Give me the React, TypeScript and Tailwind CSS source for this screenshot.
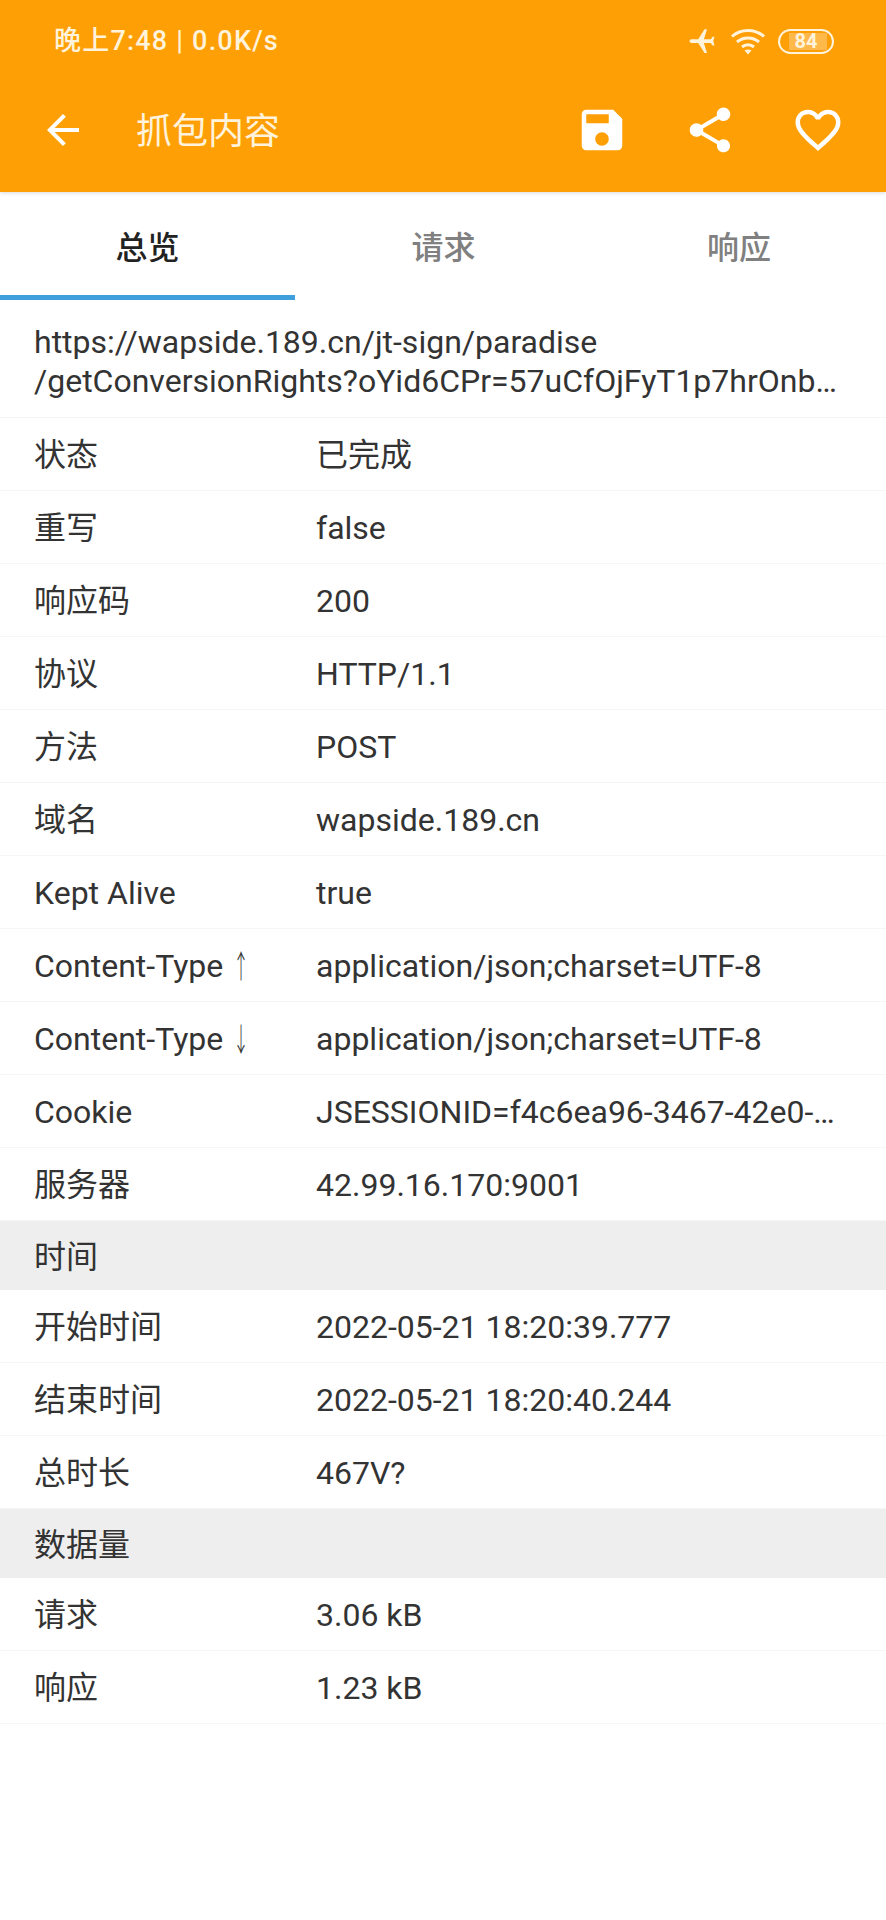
const font = { fontFamily: '"Roboto", "Noto Sans CJK SC", sans-serif' };

type R = { k: string; arrow?: string; v?: string };
const top: R[] = [
  { k: '状态', v: '已完成' },
  { k: '重写', v: 'false' },
  { k: '响应码', v: '200' },
  { k: '协议', v: 'HTTP/1.1' },
  { k: '方法', v: 'POST' },
  { k: '域名', v: 'wapside.189.cn' },
  { k: 'Kept Alive', v: 'true' },
  { k: 'Content-Type', arrow: '↑', v: 'application/json;charset=UTF-8' },
  { k: 'Content-Type', arrow: '↓', v: 'application/json;charset=UTF-8' },
  { k: 'Cookie', v: 'JSESSIONID=f4c6ea96-3467-42e0-…' },
  { k: '服务器', v: '42.99.16.170:9001' },
];
const time: R[] = [
  { k: '开始时间', v: '2022-05-21 18:20:39.777' },
  { k: '结束时间', v: '2022-05-21 18:20:40.244' },
  { k: '总时长', v: '467V?' },
];
const data: R[] = [
  { k: '请求', v: '3.06 kB' },
  { k: '响应', v: '1.23 kB' },
];

function Row({ k, arrow, v }: R) {
  return (
    <div className="flex h-[73px] items-center border-b border-[#f6f6f6] pl-[34px] pr-[40px] pt-[2px] text-[32px] leading-[40px] text-[#333333]">
      <div className="flex w-[282px] shrink-0 items-center whitespace-nowrap">
        <span>{k}</span>
        {arrow && <span className="ml-[2px] inline-block h-[40px] scale-x-50 font-['Noto_Sans_CJK_SC'] font-light leading-[36px]">{arrow}</span>}
      </div>
      <div className="min-w-0 flex-1 whitespace-nowrap">{v}</div>
    </div>
  );
}

function Section({ title }: { title: string }) {
  return (
    <div className="flex h-[69px] items-center bg-[#eeeeee] pl-[34px] pt-[2px] text-[32px] text-[#333333]">{title}</div>
  );
}

export default function App() {
  return (
    <div className="h-[1920px] w-[886px] overflow-hidden bg-white" style={font}>
      <header className="h-[192px] bg-[#ff9f06] text-white shadow-[0_1px_4px_rgba(0,0,0,0.15)]">
        <div className="flex h-[80px] items-center pl-[54px] pr-[52px] pt-[2px] text-[27px] font-medium text-[#fff3dc]">
          <span className="tracking-[1.2px]">晚上7:48 | 0.0K/s</span>
          <div className="ml-auto flex items-center">
            <svg width="34" height="30" viewBox="0 0 24 24" fill="#fff3dc" className="mr-[11px]">
              <path d="M21 16v-2l-8-5V3.5C13 2.67 12.33 2 11.5 2S10 2.67 10 3.5V9l-8 5v2l8-2.5V19l-2 1.5V22l3.5-1 3.5 1v-1.5L13 19v-5.5l8 2.5z" transform="rotate(-90 12 12) translate(0.5 0)" />
            </svg>
            <svg width="36" height="30" viewBox="0 0 36 30" fill="none" stroke="#fff3dc" strokeWidth="3" className="mr-[12px]">
              <path d="M2 10.5C11 2.5 25 2.5 34 10.5" />
              <path d="M7 16C13.5 10.5 22.5 10.5 29 16" />
              <path d="M12 21C15.5 18 20.5 18 24 21" />
              <path d="M18 28.5l-3.5-4c2-1.5 5-1.5 7 0z" fill="#fff3dc" stroke="none" />
            </svg>
            <div className="relative flex h-[25px] w-[56px] items-center justify-center rounded-full border-2 border-[#fff3dc] text-[20px] font-bold leading-none">
              <div className="absolute left-[9px] top-[2px] h-[17px] w-[38px] bg-[#ffb84a]" />
              <span className="relative">84</span>
            </div>
          </div>
        </div>
        <div className="flex h-[112px] items-center pb-[13px]">
          <svg width="48" height="48" viewBox="0 0 24 24" fill="#fff" className="ml-[39px]">
            <path d="M20 11H7.83l5.59-5.59L12 4l-8 8 8 8 1.41-1.41L7.83 13H20v-2z" />
          </svg>
          <span className="ml-[49px] mt-[5px] text-[36px] leading-none text-[#fff3dc]">抓包内容</span>
          <div className="ml-auto flex items-center">
            <svg width="54" height="54" viewBox="0 0 24 24" fill="#fff">
              <path d="M17 3H5c-1.11 0-2 .9-2 2v14c0 1.1.89 2 2 2h14c1.1 0 2-.9 2-2V7l-4-4zm-5 16c-1.66 0-3-1.34-3-3s1.34-3 3-3 3 1.34 3 3-1.34 3-3 3zm3-10H5V5h10v4z" />
            </svg>
            <svg width="54" height="54" viewBox="0 0 24 24" fill="#fff" className="ml-[54px]">
              <path d="M18 16.08c-.76 0-1.44.3-1.96.77L8.91 12.7c.05-.23.09-.46.09-.7s-.04-.47-.09-.7l7.05-4.11c.54.5 1.25.81 2.04.81 1.66 0 3-1.34 3-3s-1.34-3-3-3-3 1.34-3 3c0 .24.04.47.09.7L8.04 9.81C7.5 9.31 6.79 9 6 9c-1.66 0-3 1.34-3 3s1.34 3 3 3c.79 0 1.5-.31 2.04-.81l7.12 4.16c-.05.21-.08.43-.08.65 0 1.61 1.31 2.92 2.92 2.92 1.61 0 2.92-1.31 2.92-2.92s-1.31-2.92-2.92-2.92z" />
            </svg>
            <svg width="54" height="54" viewBox="0 0 24 24" fill="#fff" className="ml-[54px] mr-[41px]">
              <path d="M16.5 3c-1.74 0-3.41.81-4.5 2.09C10.91 3.81 9.24 3 7.5 3 4.42 3 2 5.42 2 8.5c0 3.78 3.4 6.86 8.55 11.54L12 21.35l1.45-1.32C18.6 15.36 22 12.28 22 8.5 22 5.42 19.58 3 16.5 3zm-4.4 15.55l-.1.1-.1-.1C7.14 14.24 4 11.39 4 8.5 4 6.5 5.5 5 7.5 5c1.54 0 3.04.99 3.57 2.36h1.87C13.46 5.99 14.96 5 16.5 5c2 0 3.5 1.5 3.5 3.5 0 2.89-3.14 5.74-7.9 10.05z" />
            </svg>
          </div>
        </div>
      </header>

      <nav className="flex h-[108px]">
        <div className="flex w-[295px] items-center justify-center border-b-[5px] border-[#3f9fdc] pt-[8px] text-[32px] font-medium text-[#222222]">总览</div>
        <div className="flex w-[296px] items-center justify-center pl-[1px] pb-[-2px] pt-[3px] text-[32px] font-medium text-[#808080]">请求</div>
        <div className="flex w-[295px] items-center justify-center pl-[1px] pt-[3px] text-[32px] font-medium text-[#808080]">响应</div>
      </nav>

      <div className="h-[118px] border-b border-[#f6f6f6] pl-[34px] pt-[23px] text-[32px] leading-[39px] text-[#333333]">
        <div className="whitespace-nowrap">https://wapside.189.cn/jt-sign/paradise</div>
        <div className="whitespace-nowrap">/getConversionRights?oYid6CPr=57uCfOjFyT1p7hrOnb…</div>
      </div>

      {top.map((r) => <Row key={r.k + (r.arrow ?? '')} {...r} />)}
      <Section title="时间" />
      {time.map((r) => <Row key={r.k} {...r} />)}
      <Section title="数据量" />
      {data.map((r) => <Row key={r.k} {...r} />)}
    </div>
  );
}
